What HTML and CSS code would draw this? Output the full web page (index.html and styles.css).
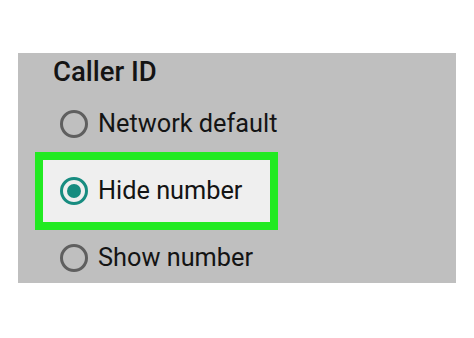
FILE: index.html
```html
<!DOCTYPE html>
<html>
<head>
<meta charset="utf-8">
<link rel="stylesheet" href="styles.css">
</head>
<body>
<div class="panel">
  <div class="title">Caller ID</div>
  <div class="options">
    <div class="option"><span class="radio"></span><span class="label">Network default</span></div>
    <div class="option selected"><span class="radio on"></span><span class="label">Hide number</span></div>
    <div class="option"><span class="radio"></span><span class="label">Show number</span></div>
  </div>
</div>
</body>
</html>
```
FILE: styles.css
```css
html, body {
  margin: 0;
  padding: 0;
  background: #ffffff;
}
body {
  font-family: Roboto, "Noto Sans", sans-serif;
  color: #141414;
}
.panel {
  margin: 53px 0 0 18px;
  width: 438px;
  height: 230px;
  background: #bfbfbf;
  padding-top: 3px;
  box-sizing: border-box;
  overflow: hidden;
}
.title {
  font-size: 27.5px;
  font-weight: 500;
  line-height: 31px;
  padding-left: 35px;
}
.options {
  margin-top: 3px;
  display: flex;
  flex-direction: column;
}
.option {
  display: flex;
  align-items: center;
  gap: 10px;
  height: 67px;
  box-sizing: border-box;
  margin-left: 17px;
  width: 243px;
  padding-left: 25px;
}
.option.selected {
  height: 78px;
  margin-top: -5px;
  margin-bottom: -6px;
  border: 8px solid #22ea22;
  background: #efefef;
  padding-left: 17px;
}
.radio {
  width: 28px;
  height: 28px;
  box-sizing: border-box;
  border: 3px solid #5f5f5f;
  border-radius: 50%;
  display: flex;
  align-items: center;
  justify-content: center;
  flex: none;
}
.radio.on {
  border-color: #178c80;
}
.radio.on::after {
  content: "";
  width: 14px;
  height: 14px;
  border-radius: 50%;
  background: #178c80;
}
.label {
  font-size: 25.3px;
  line-height: 30px;
  white-space: nowrap;
}
```
